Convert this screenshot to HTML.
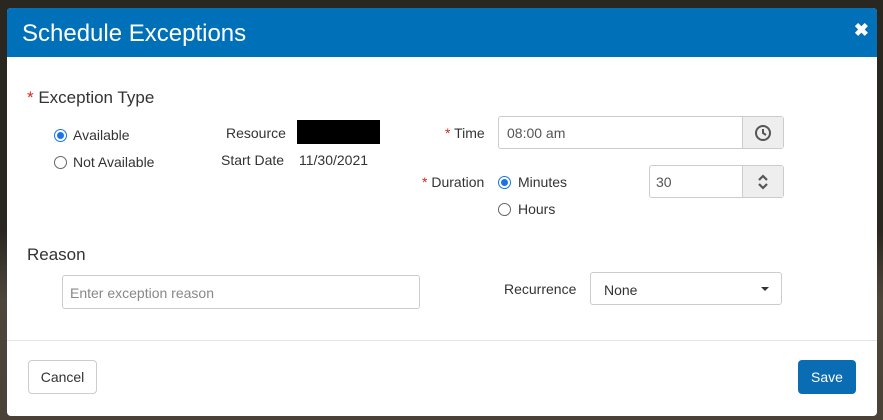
<!DOCTYPE html>
<html><head><style>
*{box-sizing:border-box;margin:0;padding:0}
body{width:883px;height:420px;position:relative;overflow:hidden;font-family:"Liberation Sans",Arial,sans-serif;color:#333;background:linear-gradient(#2a2720 0,#2a2720 230px,#4e463b 300px,#4a4236 420px)}
.a{position:absolute}
.modal{left:7px;top:8px;width:870px;height:408px;background:#fff;border-radius:4px;overflow:hidden}
.hdr{left:0;top:0;width:870px;height:49px;background:#0070b8;color:#fff;font-size:24px;padding:12px 0 0 15px}
.x{right:8px;top:12px;color:#fff;font-size:18px;font-weight:bold}
.t{font-size:14px}
.req{color:#d9251c}
.radio{width:13px;height:13px;border:1px solid #666;border-radius:50%}
.radio.on{border:1.5px solid #1a73e8}
.radio.on::after{content:"";position:absolute;left:1.5px;top:1.5px;width:7px;height:7px;border-radius:50%;background:#1a73e8}
.inp{border:1px solid #ccc;border-radius:3px;background:#fff;font-size:14px;color:#555}
.addon{background:#eee;border-left:1px solid #ccc}
</style></head><body>
<div class="a modal">
 <div class="a hdr">Schedule Exceptions</div>
 <div class="a x">✖</div>
 <div class="a" style="left:20px;top:80px;font-size:17px"><span class="req">*</span> Exception Type</div>
 <div class="a radio on" style="left:47px;top:121px"></div>
 <div class="a t" style="left:66px;top:119px">Available</div>
 <div class="a radio" style="left:47px;top:148px"></div>
 <div class="a t" style="left:66px;top:146px">Not Available</div>
 <div class="a t" style="left:219px;top:117px">Resource</div>
 <div class="a" style="left:290px;top:112px;width:83px;height:24px;background:#000"></div>
 <div class="a t" style="left:214px;top:144px">Start Date</div>
 <div class="a t" style="left:292px;top:144px">11/30/2021</div>
 <div class="a t" style="left:438px;top:117px"><span class="req">*</span> Time</div>
 <div class="a inp" style="left:491px;top:108px;width:286px;height:33px">
  <div class="a" style="left:8px;top:8px">08:00 am</div>
  <div class="a addon" style="right:0;top:0;width:41px;height:31px">
   <svg class="a" style="left:11px;top:7px" width="18" height="18" viewBox="0 0 18 18"><circle cx="9" cy="9" r="7" fill="none" stroke="#555" stroke-width="2"/><path d="M9 5v4l3 2" fill="none" stroke="#555" stroke-width="2"/></svg>
  </div>
 </div>
 <div class="a t" style="left:415px;top:166px"><span class="req">*</span> Duration</div>
 <div class="a radio on" style="left:491px;top:168px"></div>
 <div class="a t" style="left:511px;top:166px">Minutes</div>
 <div class="a radio" style="left:491px;top:195px"></div>
 <div class="a t" style="left:511px;top:193px">Hours</div>
 <div class="a inp" style="left:642px;top:157px;width:135px;height:33px">
  <div class="a" style="left:6px;top:8px">30</div>
  <div class="a addon" style="right:0;top:0;width:41px;height:31px">
   <svg class="a" style="left:14px;top:7px" width="12" height="18" viewBox="0 0 12 18"><path d="M2 7l4-4 4 4M2 11l4 4 4-4" fill="none" stroke="#555" stroke-width="2.2"/></svg>
  </div>
 </div>
 <div class="a" style="left:20px;top:237px;font-size:17px">Reason</div>
 <div class="a inp" style="left:55px;top:267px;width:358px;height:34px"><div class="a" style="left:7px;top:9px;color:#888">Enter exception reason</div></div>
 <div class="a t" style="left:497px;top:273px">Recurrence</div>
 <div class="a inp" style="left:583px;top:264px;width:192px;height:33px">
  <div class="a" style="left:13px;top:9px;color:#333">None</div>
  <div class="a" style="right:12px;top:14px;width:0;height:0;border-left:4px solid transparent;border-right:4px solid transparent;border-top:4px solid #333"></div>
 </div>
 <div class="a" style="left:0;top:332px;width:870px;height:1px;background:#e5e5e5"></div>
 <div class="a" style="left:21px;top:352px;width:69px;height:34px;border:1px solid #ccc;border-radius:4px;font-size:14px;text-align:center;line-height:32px">Cancel</div>
 <div class="a" style="left:791px;top:352px;width:58px;height:34px;background:#0a6cb3;border-radius:4px;color:#fff;font-size:14px;text-align:center;line-height:34px">Save</div>
</div>
</body></html>
